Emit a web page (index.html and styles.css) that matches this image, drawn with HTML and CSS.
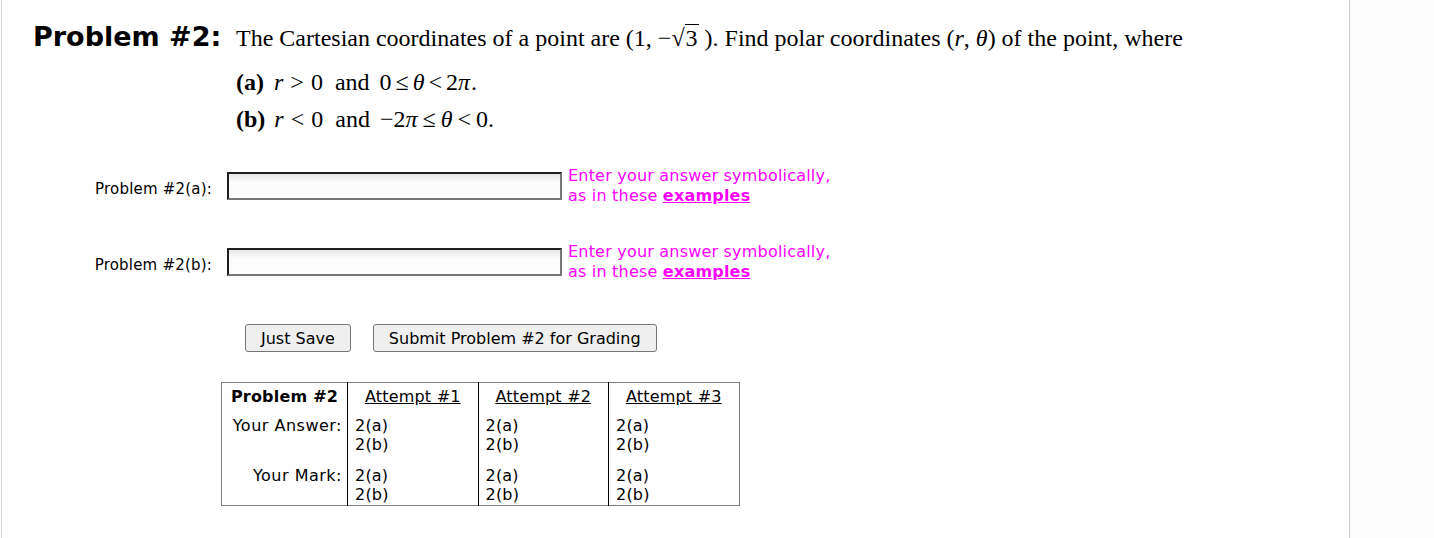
FILE: index.html
```html
<!DOCTYPE html>
<html lang="en">
<head>
    <meta charset="UTF-8">
    <title>Problem #2</title>
    <link rel="stylesheet" href="styles.css">
</head>
<body>
    <div class="page">
        <div class="problem">
            <div class="problem-title">Problem #2:</div>
            <div class="problem-body">
                <div class="statement">The Cartesian coordinates of a point are (1,&nbsp;&minus;<span class="root">&radic;<span class="radicand">3</span></span>&nbsp;). Find polar coordinates (<i>r</i>,&nbsp;<i>&theta;</i>) of the point, where</div>
                <div class="part"><b class="tag">(a)</b><i>r</i><span class="op sp">&gt;</span>0<span class="word">and</span>0<span class="op">&le;</span><i>&theta;</i><span class="op">&lt;</span>2<i class="pi">&pi;</i>.</div>
                <div class="part wide"><b class="tag">(b)</b><i>r</i><span class="op sp">&lt;</span>0<span class="word">and</span>&minus;2<i>&pi;</i><span class="op">&le;</span><i>&theta;</i><span class="op">&lt;</span>0.</div>
            </div>
        </div>

        <div class="answer-row">
            <label class="answer-label" for="ans_a">Problem #2(a):</label>
            <input class="answer-input" id="ans_a" type="text">
            <div class="hint">Enter your answer symbolically,<br>as in these <a href="#">examples</a></div>
        </div>

        <div class="answer-row">
            <label class="answer-label" for="ans_b">Problem #2(b):</label>
            <input class="answer-input" id="ans_b" type="text">
            <div class="hint">Enter your answer symbolically,<br>as in these <a href="#">examples</a></div>
        </div>

        <div class="buttons">
            <button class="btn">Just Save</button>
            <button class="btn">Submit Problem #2 for Grading</button>
        </div>

        <table class="attempts">
            <tr>
                <th class="first">Problem #2</th>
                <th><a href="#">Attempt #1</a></th>
                <th><a href="#">Attempt #2</a></th>
                <th><a href="#">Attempt #3</a></th>
            </tr>
            <tr class="answers">
                <td class="first">Your Answer:</td>
                <td>2(a)<br>2(b)</td>
                <td>2(a)<br>2(b)</td>
                <td>2(a)<br>2(b)</td>
            </tr>
            <tr class="marks">
                <td class="first">Your Mark:</td>
                <td>2(a)<br>2(b)</td>
                <td>2(a)<br>2(b)</td>
                <td>2(a)<br>2(b)</td>
            </tr>
        </table>
    </div>
</body>
</html>
```

FILE: styles.css
```css
html { background: #fcfcfc; }
body {
    margin: 0;
    font-family: "DejaVu Sans", Verdana, sans-serif;
    font-size: 16px;
    color: #000;
}
.page {
    margin-left: 1px;
    width: 1349px;
    height: 538px;
    box-sizing: border-box;
    background: #fff;
    border-left: 1px solid #dcdcdc;
    border-right: 1px solid #cfcfcf;
    padding-top: 21px;
}

/* problem statement */
.problem { display: flex; align-items: baseline; }
.problem-title {
    width: 203px;
    padding-left: 31px;
    font-weight: bold;
    font-size: 27px;
    line-height: 32px;
}
.problem-body {
    font-family: "Liberation Serif", "Times New Roman", serif;
    font-size: 24px;
}
.statement { line-height: 32px; }
.root { display: inline-block; }
.radicand { border-top: 1.5px solid #000; padding: 0 1px; }
.part { line-height: 37px; }
.statement + .part { margin-top: 10px; }
.tag { margin-right: 10px; }
.wide .tag { margin-right: 9px; }
.op { margin: 0 4px; }
.op.sp { margin: 0 7px; }
.wide .op { margin: 0 5px; }
.wide .op.sp { margin: 0 7px; }
.pi { margin-right: 1px; }
.word { margin: 0 10px 0 12px; }

/* answer boxes */
.answer-row {
    display: flex;
    align-items: center;
    margin-top: 28px;
}
.answer-row + .answer-row { margin-top: 36px; }
.answer-label {
    width: 225px;
    padding-right: 15px;
    margin-top: 5px;
    box-sizing: border-box;
    text-align: right;
    font-size: 15px;
    letter-spacing: 0.2px;
}
.answer-input {
    width: 335px;
    height: 28px;
    box-sizing: border-box;
    margin: 0;
    border-style: solid;
    border-width: 2px;
    border-color: #1e1e1e #777 #777 #1e1e1e;
    background: linear-gradient(#e6e6e6, #fbfbfb 35%, #fdfdfd);
}
.hint {
    margin-left: 6px;
    color: #f0f;
    font-size: 16px;
    line-height: 20px;
    letter-spacing: 0.2px;
}
.hint a { color: #f0f; font-weight: bold; }

/* buttons */
.buttons {
    display: flex;
    gap: 22px;
    padding-left: 243px;
    margin-top: 42px;
}
.btn {
    height: 28px;
    padding: 0 15px;
    font-family: "DejaVu Sans", Verdana, sans-serif;
    font-size: 16px;
    color: #000;
    background: #efefef;
    border: 1px solid #767676;
    border-radius: 3px;
}

/* attempts table */
.attempts {
    margin: 30px 0 0 219px;
    border-collapse: collapse;
    border: 1px solid #808080;
    letter-spacing: 0.2px;
}
.attempts th, .attempts td {
    border-left: 1px solid #000;
    vertical-align: top;
    text-align: left;
    font-weight: normal;
    padding: 5px 8px 5px 7px;
    width: 113.5px;
}
.attempts th {
    text-align: center;
    padding: 4px 8px 5px;
}
.attempts th a { color: #000; }
.attempts .first {
    border-left: none;
    width: 109px;
    text-align: right;
    padding-left: 10px;
    padding-right: 5px;
    letter-spacing: 0.5px;
}
.attempts th.first { font-weight: bold; text-align: center; padding-left: 8px; padding-right: 8px; letter-spacing: 0.2px; }
.attempts .answers td { padding-bottom: 7px; }
.attempts .marks td { padding-bottom: 1px; }
```
